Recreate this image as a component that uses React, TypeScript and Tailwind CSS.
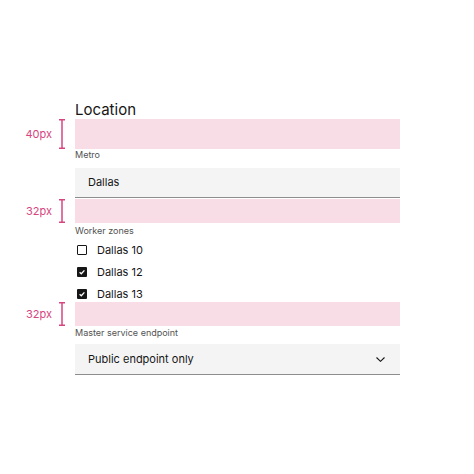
import React from "react";

const font = { fontFamily: "Inter, 'Noto Sans', sans-serif" };

function Marker({ label, h }: { label: string; h: number }) {
  return (
    <div className="w-[75px] flex items-center justify-end pr-[10px] gap-[7px]">
      <span className="text-[11px] leading-none text-[#d6457f]">{label}</span>
      <svg width="6" height={h} viewBox={`0 0 6 ${h}`} className="block">
        <line x1="0" y1="0.75" x2="6" y2="0.75" stroke="#d6457f" strokeWidth="1.5" />
        <line x1="3" y1="0" x2="3" y2={h} stroke="#d6457f" strokeWidth="1.5" />
        <line x1="0" y1={h - 0.75} x2="6" y2={h - 0.75} stroke="#d6457f" strokeWidth="1.5" />
      </svg>
    </div>
  );
}

function Spacer({ label, h }: { label: string; h: number }) {
  return (
    <div className="flex" style={{ height: h }}>
      <Marker label={label} h={h} />
      <div className="w-[325px] h-full bg-[#f8dde7]" />
    </div>
  );
}

function Checkbox({ checked, label }: { checked: boolean; label: string }) {
  return (
    <div className="flex items-center h-[16px]">
      <div
        className={
          checked
            ? "ml-[2px] w-[10px] h-[10px] rounded-[1px] bg-[#161616] flex items-center justify-center"
            : "ml-[2px] w-[10px] h-[10px] rounded-[1px] border border-[#161616] bg-white"
        }
      >
        {checked && (
          <svg width="8" height="8" viewBox="0 0 8 8">
            <polyline points="1.6,4.2 3.3,5.8 6.4,2.4" fill="none" stroke="white" strokeWidth="1.3" />
          </svg>
        )}
      </div>
      <span className="ml-[10px] text-[11px] text-[#161616] leading-none">{label}</span>
    </div>
  );
}

export default function App() {
  return (
    <div className="w-[474px] h-[474px] bg-white pt-[100px]" style={font}>
      <div className="ml-[75px] text-[15px] leading-[19px] text-[#161616]">Location</div>
      <Spacer label="40px" h={30} />
      <div className="ml-[75px] w-[325px] text-[9px] leading-[12px] text-[#525252]">Metro</div>
      <div className="ml-[75px] mt-[7px] w-[325px] h-[30px] bg-[#f4f4f4] border-b border-[#8d8d8d] flex items-center pl-[13px]">
        <span className="text-[11px] text-[#161616]">Dallas</span>
      </div>
      <div className="mt-[1px]">
        <Spacer label="32px" h={24} />
      </div>
      <div className="ml-[75px] w-[325px] pt-[2px] text-[9px] leading-[12px] text-[#525252]">Worker zones</div>
      <div className="ml-[75px] mt-[5px] flex flex-col gap-[6px]">
        <Checkbox checked={false} label="Dallas 10" />
        <Checkbox checked={true} label="Dallas 12" />
        <Checkbox checked={true} label="Dallas 13" />
      </div>
      <Spacer label="32px" h={24} />
      <div className="ml-[75px] w-[325px] pt-[1px] text-[9px] leading-[12px] text-[#525252]">Master service endpoint</div>
      <div className="ml-[75px] mt-[5px] w-[325px] h-[31px] bg-[#f4f4f4] border-b border-[#8d8d8d] flex items-center justify-between pl-[13px] pr-[15px]">
        <span className="text-[11px] text-[#161616]">Public endpoint only</span>
        <svg width="9" height="5" viewBox="0 0 9 5">
          <polyline points="0.5,0.5 4.5,4.3 8.5,0.5" fill="none" stroke="#161616" strokeWidth="1.1" />
        </svg>
      </div>
    </div>
  );
}
